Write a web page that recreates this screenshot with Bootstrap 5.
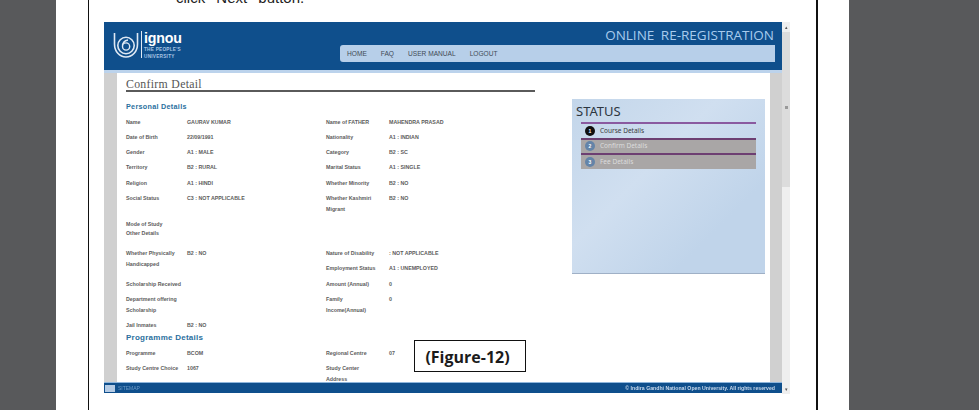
<!DOCTYPE html>
<html lang="en">
<head>
<meta charset="utf-8">
<title>Figure 12</title>
<link rel="stylesheet" href="https://cdn.jsdelivr.net/npm/bootstrap@5.3.0/dist/css/bootstrap.min.css">
<style>
html,body{height:410px;overflow:hidden;background:#58595b;margin:0}
.doc-page{width:793px;margin-left:56px;height:410px;background:#fff;padding:0 31px 0 32px}
.doc-sheet{height:410px;border-left:1px solid #111;border-right:2px solid #111;padding-left:15px;position:relative;overflow:hidden}
.doc-line{font:15px/16px "Liberation Sans",sans-serif;color:#222;padding-left:72px;margin-top:-10px;height:32px;word-spacing:2px}
.shot{width:686px;height:372px;filter:blur(.55px);font-family:"Liberation Sans",sans-serif}
.shot-main{width:678px;height:372px}
.shot-bar{width:8px;height:372px;background:#efefef;color:#555;font-size:5px;line-height:10px;text-align:center}
.bar-thumb{height:155px;background:#dcdcdc}
.bar-grip{height:3px;width:3px;background:#999;margin:74px auto 0}
.hdr{height:48px;background:#0f4f8c}
.hdr-strip{height:3px;background:#bcd3ec}
.logo{padding:9px 0 0 9px}
.logo-bar{width:1px;height:27px;background:#dfe9f4;margin:0 2px 0 2px}
.logo-name{font:700 14.2px/15px "Liberation Sans",sans-serif;color:#fff;letter-spacing:-.2px}
.logo-sub{font:700 4.7px/7px "Liberation Sans",sans-serif;color:#a9c6e4;letter-spacing:.25px}
.hdr-right{width:442px}
.hdr-title{font:400 13.5px/17px "Open Sans",sans-serif;color:#a8cbee;text-align:right;padding:5px 8px 0 0;height:23px;word-spacing:3px;white-space:nowrap}
.hdr-nav{height:17px;margin-right:7px;background:#b7cfe9;border-radius:3px 0 0 3px;font:6.6px/17px "Liberation Sans",sans-serif;color:#3f4a55;padding-left:7px}
.nv-a{margin-right:14px}
.nv-b{margin-right:14px}
.nv-c{margin-right:14px}
.body-area{height:309px;overflow:hidden;background:#d0d0d0;padding:0 12px 0 13px}
.body-white{height:309px;background:#fff;overflow:hidden}
.form-col{width:418px;padding-left:9px;flex:none}
.page-title{font:11.8px/13px "Liberation Serif",serif;color:#555;letter-spacing:.3px;padding-top:5px;border-bottom:2px solid #5a5a5a;margin-bottom:8.5px;height:19px}
.sect{font:700 7.2px/11px "Liberation Sans",sans-serif;color:#2a6f9e;letter-spacing:.3px;margin-bottom:5px}
.frm{display:grid;grid-template-columns:61px 139px 63px 1fr;font:700 5.3px/11px "Liberation Sans",sans-serif;color:#5c5c5c}
.frm>div{padding-bottom:4.3px;white-space:nowrap}
.frm>.two{grid-row:span 2}
.frm>.tight{height:9px;padding:0}
.frm>.after{height:19.7px;padding:0}
.frm>.bare{height:11px;padding:0}
.frm>.wide{grid-column:1/-1;font:700 8px/13px "Liberation Sans",sans-serif;color:#2a6f9e;padding-bottom:4px;letter-spacing:.25px}
.status{width:193px;height:175px;margin:26px 0 0 37px;padding:3px 9px 0;background:linear-gradient(135deg,#c3d6ea 0%,#d0dff0 40%,#c0d4ea 75%);border-bottom:1px solid #9fb0c6;flex:none}
.status-title{font:400 13px/19px "Noto Sans",sans-serif;color:#2d3640;margin-left:-5px;height:20px}
.st-item{height:15.5px;border-top:2px solid #8a5aa0;font:6.5px/14px "Noto Sans",sans-serif;color:#3a3a3a}
.st-item.off{background:#a9a6a6;color:#dcdcdc;border-top-color:#6d3f72}
.st-num{width:10px;height:10px;border-radius:50%;background:#111;color:#fff;font:700 5px/10px "Liberation Sans",sans-serif;text-align:center;margin:0 5px 0 4px}
.off .st-num{background:#6484a8}
.ftr{height:11px;background:#0f4f8c;border-top:1px solid #8fb6dc;font:5px/10px "Liberation Sans",sans-serif;color:#6f9cc8;padding:0 7px 0 1px}
.ftr-ico{width:10px;height:7px;background:#b5cbe4;margin-right:3px}
.ftr-copy{font-weight:700;font-size:5.2px;color:#c8d9ec}
.fig-box{position:absolute;left:325px;top:340px;width:112px;height:32px;border:1px solid #111;background:#fff;font:700 16px/32px "Open Sans",sans-serif;color:#1b1b1b;padding-right:5px;text-align:center}
</style>
</head>
<body>
<div class="doc-page">
  <div class="doc-sheet">
    <div class="doc-line">click “Next” button.</div>
    <div class="shot d-flex">
      <div class="shot-main">
        <div class="hdr d-flex justify-content-between">
          <div class="logo d-flex">
            <svg width="26" height="28" viewBox="0 0 26 28" fill="none" stroke="#dfe9f4" aria-hidden="true">
              <path d="M1.5 2V13C1.5 20.5 6.5 26 13 26S24.5 20.5 24.5 13V2" stroke-width="1.6"/>
              <circle cx="13" cy="14.5" r="8.2" stroke-width="1.6"/>
              <path d="M15 9C11.5 9.5 9.5 12 9.5 15.5a3.6 3.6 0 1 0 3.6-3.6C12 11.9 10.5 12.5 9.9 13.5" stroke-width="1.4"/>
            </svg>
            <div class="logo-bar"></div>
            <div>
              <div class="logo-name">ignou</div>
              <div class="logo-sub">THE PEOPLE'S<br>UNIVERSITY</div>
            </div>
          </div>
          <div class="hdr-right">
            <div class="hdr-title">ONLINE RE-REGISTRATION</div>
            <div class="hdr-nav d-flex"><span class="nv-a">HOME</span><span class="nv-b">FAQ</span><span class="nv-c">USER MANUAL</span><span>LOGOUT</span></div>
          </div>
        </div>
        <div class="hdr-strip"></div>
        <div class="body-area">
          <div class="body-white d-flex">
            <div class="form-col">
              <div class="page-title">Confirm Detail</div>
              <div class="sect">Personal Details</div>
              <div class="frm">
                <div>Name</div><div>GAURAV KUMAR</div><div>Name of FATHER</div><div>MAHENDRA PRASAD</div>
                <div>Date of Birth</div><div>22/09/1991</div><div>Nationality</div><div>A1 : INDIAN</div>
                <div>Gender</div><div>A1 : MALE</div><div>Category</div><div>B2 : SC</div>
                <div>Territory</div><div>B2 : RURAL</div><div>Marital Status</div><div>A1 : SINGLE</div>
                <div>Religion</div><div>A1 : HINDI</div><div>Whether Minority</div><div>B2 : NO</div>
                <div>Social Status</div><div>C3 : NOT APPLICABLE</div><div>Whether Kashmiri<br>Migrant</div><div>B2 : NO</div>
                <div class="tight">Mode of Study</div><div class="tight"></div><div class="tight"></div><div class="tight"></div>
                <div class="after">Other Details</div><div class="after"></div><div class="after"></div><div class="after"></div>
                <div class="two">Whether Physically<br>Handicapped</div><div class="two">B2 : NO</div><div>Nature of Disability</div><div>: NOT APPLICABLE</div>
                <div>Employment Status</div><div>A1 : UNEMPLOYED</div>
                <div>Scholarship Received</div><div></div><div>Amount (Annual)</div><div>0</div>
                <div>Department offering<br>Scholarship</div><div></div><div>Family<br>Income(Annual)</div><div>0</div>
                <div class="bare">Jail Inmates</div><div class="bare">B2 : NO</div><div class="bare"></div><div class="bare"></div>
                <div class="wide">Programme Details</div>
                <div>Programme</div><div>BCOM</div><div>Regional Centre</div><div>07</div>
                <div>Study Centre Choice</div><div>1067</div><div>Study Center<br>Address</div><div></div>
              </div>
            </div>
            <div class="status">
              <div class="status-title">STATUS</div>
              <div class="st-item d-flex align-items-center"><span class="st-num">1</span>Course Details</div>
              <div class="st-item off d-flex align-items-center"><span class="st-num">2</span>Confirm Details</div>
              <div class="st-item off d-flex align-items-center"><span class="st-num">3</span>Fee Details</div>
            </div>
          </div>
        </div>
        <div class="ftr d-flex align-items-center justify-content-between">
          <div class="d-flex align-items-center"><div class="ftr-ico"></div>SITEMAP</div>
          <div class="ftr-copy">© Indira Gandhi National Open University. All rights reserved</div>
        </div>
      </div>
      <div class="shot-bar d-flex flex-column">
        <div>▴</div>
        <div class="bar-thumb"><div class="bar-grip"></div></div>
        <div class="mt-auto">▾</div>
      </div>
    </div>
    <div class="fig-box">(Figure-12)</div>
  </div>
</div>
<script src="https://cdn.jsdelivr.net/npm/bootstrap@5.3.0/dist/js/bootstrap.bundle.min.js"></script>
</body>
</html>
